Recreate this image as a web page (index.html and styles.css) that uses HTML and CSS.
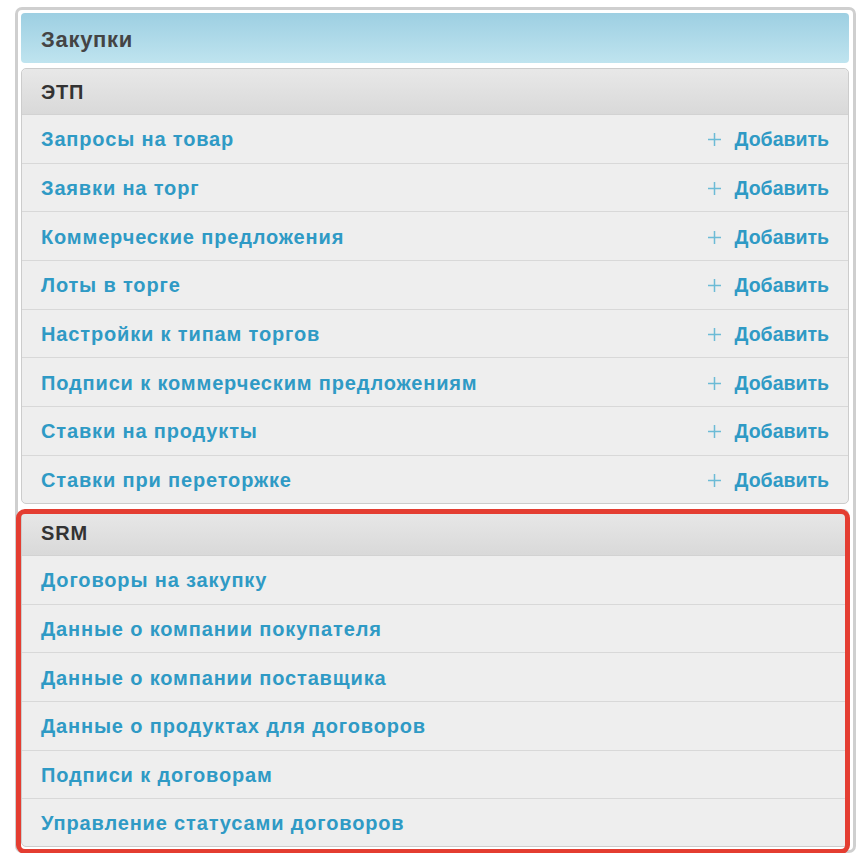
FILE: index.html
```html
<!DOCTYPE html>
<html lang="ru">
  <head>
    <meta charset="UTF-8" />
    <meta name="viewport" content="width=device-width, initial-scale=1.0" />
    <title>Закупки</title>
    <link rel="stylesheet" href="styles.css">
  </head>
  <body>
    <div class="dashboard">
      <h2 class="app-title">Закупки</h2>

      <div class="module">
        <h3 class="module-title">ЭТП</h3>
        <ul class="model-list">
          <li class="model-row"><a href="#">Запросы на товар</a><a class="add-link" href="#"><svg class="plus" viewBox="0 0 15 15"><path d="M7.5 1v13M1 7.5h13"/></svg>Добавить</a></li>
          <li class="model-row"><a href="#">Заявки на торг</a><a class="add-link" href="#"><svg class="plus" viewBox="0 0 15 15"><path d="M7.5 1v13M1 7.5h13"/></svg>Добавить</a></li>
          <li class="model-row"><a href="#">Коммерческие предложения</a><a class="add-link" href="#"><svg class="plus" viewBox="0 0 15 15"><path d="M7.5 1v13M1 7.5h13"/></svg>Добавить</a></li>
          <li class="model-row"><a href="#">Лоты в торге</a><a class="add-link" href="#"><svg class="plus" viewBox="0 0 15 15"><path d="M7.5 1v13M1 7.5h13"/></svg>Добавить</a></li>
          <li class="model-row"><a href="#">Настройки к типам торгов</a><a class="add-link" href="#"><svg class="plus" viewBox="0 0 15 15"><path d="M7.5 1v13M1 7.5h13"/></svg>Добавить</a></li>
          <li class="model-row"><a href="#">Подписи к коммерческим предложениям</a><a class="add-link" href="#"><svg class="plus" viewBox="0 0 15 15"><path d="M7.5 1v13M1 7.5h13"/></svg>Добавить</a></li>
          <li class="model-row"><a href="#">Ставки на продукты</a><a class="add-link" href="#"><svg class="plus" viewBox="0 0 15 15"><path d="M7.5 1v13M1 7.5h13"/></svg>Добавить</a></li>
          <li class="model-row"><a href="#">Ставки при переторжке</a><a class="add-link" href="#"><svg class="plus" viewBox="0 0 15 15"><path d="M7.5 1v13M1 7.5h13"/></svg>Добавить</a></li>
        </ul>
      </div>

      <div class="module highlighted">
        <h3 class="module-title">SRM</h3>
        <ul class="model-list">
          <li class="model-row"><a href="#">Договоры на закупку</a></li>
          <li class="model-row"><a href="#">Данные о компании покупателя</a></li>
          <li class="model-row"><a href="#">Данные о компании поставщика</a></li>
          <li class="model-row"><a href="#">Данные о продуктах для договоров</a></li>
          <li class="model-row"><a href="#">Подписи к договорам</a></li>
          <li class="model-row"><a href="#">Управление статусами договоров</a></li>
        </ul>
      </div>
    </div>
  </body>
</html>
```

FILE: styles.css
```css
body {
  margin: 0;
  background-color: #fff;
  font-family: "Liberation Sans", Arial, sans-serif;
  font-weight: bold;
  font-size: 20px;
}

a {
  color: #2f9ac5;
  text-decoration: none;
  letter-spacing: 0.85px;
}

.dashboard {
  box-sizing: border-box;
  width: 841px;
  margin: 7px 0 0 15px;
  padding: 3px 4px 3px 3px;
  border: 3px solid #cfcfcf;
  border-radius: 7px;
}

.app-title {
  margin: 0;
  height: 50px;
  line-height: 54px;
  padding-left: 20px;
  font-size: 22px;
  letter-spacing: 0.7px;
  color: #444;
  border-radius: 4px;
  background: linear-gradient(#9dcfe2, #bfe4ef); /* light blue app bar */
}

.module {
  margin-top: 5px;
  border: 1px solid #cccccc;
  border-radius: 5px;
  background-color: #eeeeee;
}

.module-title {
  margin: 0;
  height: 45px;
  line-height: 46px;
  padding-left: 19px;
  font-size: 20px;
  letter-spacing: 0.8px;
  color: #333;
  border-bottom: 1px solid #d2d2d2;
  border-radius: 5px 5px 0 0;
  background: linear-gradient(#e8e8e8, #d9d9d9);
}

.model-list {
  list-style: none;
  margin: 0;
  padding: 0;
}

.model-row {
  box-sizing: border-box;
  height: 48.7px;
  display: flex;
  align-items: center;
  justify-content: space-between;
  padding: 2px 19px 0;
  border-bottom: 1px solid #d8d8d8;
}

.model-row:last-child {
  height: 47px;
  border-bottom: none;
}

.add-link {
  display: flex;
  align-items: center;
  font-size: 19.5px;
  letter-spacing: 0;
}

.plus {
  width: 15px;
  height: 15px;
  margin-right: 13px;
  fill: none;
  stroke: #6cbbd6;
  stroke-width: 1.5;
}

/* red annotation frame around the SRM block */
.highlighted {
  position: relative;
}

.highlighted::after {
  content: "";
  position: absolute;
  left: -6px;
  top: -1px;
  right: -2px;
  bottom: -8px;
  border: 5px solid #e43d31;
  border-radius: 9px;
  pointer-events: none;
}
```
